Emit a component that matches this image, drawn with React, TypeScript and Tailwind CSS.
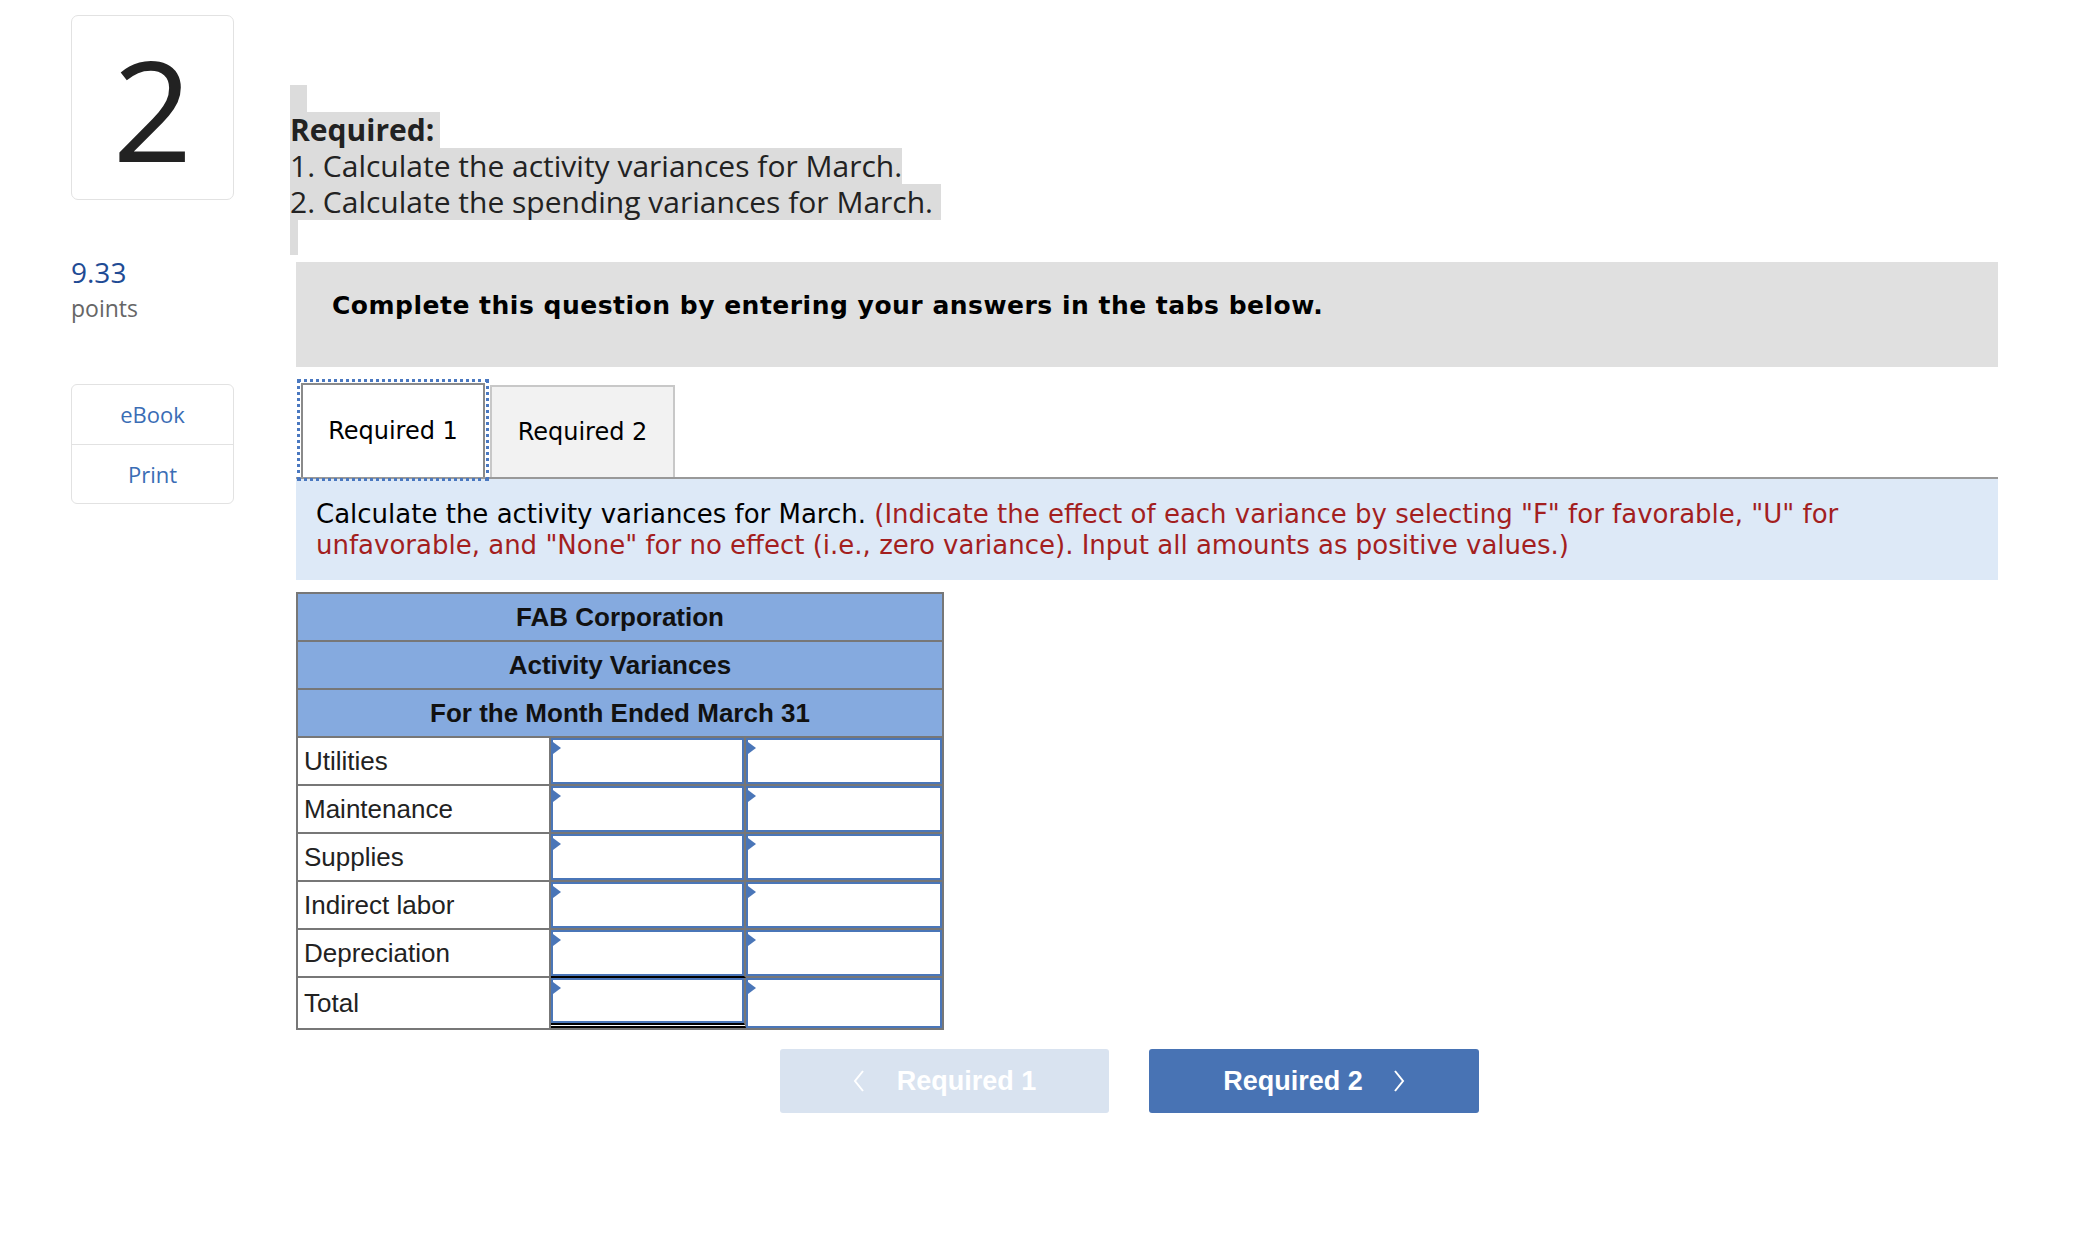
import { ReactNode } from "react";

const rows = ["Utilities", "Maintenance", "Supplies", "Indirect labor", "Depreciation"];

function InputBox({ children }: { children?: ReactNode }) {
  return (
    <div className="relative h-full w-full border-2 border-[#4a76b8] bg-white">
      <span className="absolute left-0 top-[2px] h-0 w-0 border-y-[6px] border-l-[8px] border-y-transparent border-l-[#4a76b8]" />
      {children}
    </div>
  );
}

function Chevron({ dir }: { dir: "left" | "right" }) {
  return (
    <svg width="12" height="22" viewBox="0 0 12 22" fill="none">
      <polyline
        points={dir === "left" ? "10,1 2,11 10,21" : "2,1 10,11 2,21"}
        stroke="white"
        strokeWidth="2"
      />
    </svg>
  );
}

export default function App() {
  return (
    <div className="flex min-h-screen items-start bg-white pl-[71px] pt-[15px]">
      {/* left rail */}
      <div className="w-[163px] shrink-0 font-['Open_Sans',sans-serif]">
        <div className="flex h-[185px] items-center justify-center rounded-[7px] border border-[#e2e2e2]">
          <span className="text-[140px] font-medium leading-none text-[#222]">2</span>
        </div>
        <p className="mt-[55px] text-[28px] leading-[34px] text-[#1f4b94]">9.33</p>
        <p className="mt-[4px] text-[23px] leading-[30px] text-[#666]">points</p>
        <div className="mt-[61px] rounded-[6px] border border-[#e2e2e2] text-center text-[22px] text-[#3a6db5]">
          <div className="flex h-[60px] items-center justify-center border-b border-[#e2e2e2]">eBook</div>
          <div className="flex h-[58px] items-center justify-center">Print</div>
        </div>
      </div>

      {/* main */}
      <div className="ml-[56px] pt-[70px]">
        <div className="font-['Open_Sans',sans-serif] text-[30px] leading-[36px] text-[#222]">
          <div className="h-[27px] w-[17px] bg-[#dcdcdc]" />
          <div className="w-fit bg-[#dcdcdc] pr-[6px] font-bold">Required:</div>
          <div className="w-fit bg-[#dcdcdc]">1. Calculate the activity variances for March.</div>
          <div className="w-fit bg-[#dcdcdc] pr-[8px]">2. Calculate the spending variances for March.</div>
          <div className="h-[35px] w-[8px] bg-[#dcdcdc]" />
        </div>

        <div className="ml-[6px] mt-[7px] w-[1702px]">
          <div className="h-[105px] bg-[#e0e0e0] pl-[36px] pt-[30px] font-['DejaVu_Sans',sans-serif] text-[25px] font-bold leading-[28px] tracking-[0.5px] text-black">
            Complete this question by entering your answers in the tabs below.
          </div>

          <div className="mt-[16px] flex items-end gap-[5px] pl-[5px] font-['DejaVu_Sans',sans-serif] text-[24px] text-black">
            <div className="flex h-[94px] w-[184px] items-center justify-center border-x-2 border-t-2 border-[#8a8a8a] bg-white outline-[3px] outline-offset-[1px] outline-[#4a78c0] outline-dotted">
              Required 1
            </div>
            <div className="flex h-[92px] w-[185px] items-center justify-center border-x-2 border-t-2 border-[#c8c8c8] bg-[#f2f2f2]">
              Required 2
            </div>
          </div>
          <div className="h-[2px] bg-[#999]" />

          <div className="h-[101px] bg-[#dde9f7] px-[20px] pt-[20px] font-['DejaVu_Sans',sans-serif] text-[26px] leading-[31px] text-black">
            Calculate the activity variances for March.{" "}
            <span className="text-[#a31f1f]">
              (Indicate the effect of each variance by selecting "F" for favorable, "U" for unfavorable, and "None" for no effect (i.e., zero variance). Input all amounts as positive values.)
            </span>
          </div>

          <div className="mt-[12px] w-[648px] border-2 border-[#777] font-['Liberation_Sans',Arial,sans-serif] text-[26px] text-[#222]">
            {["FAB Corporation", "Activity Variances", "For the Month Ended March 31"].map((t) => (
              <div
                key={t}
                className="flex h-[48px] items-center justify-center border-b-2 border-[#777] bg-[#85aadf] font-bold text-[#111]"
              >
                {t}
              </div>
            ))}
            {rows.map((label, i) => (
              <div key={label} className="flex h-[48px]">
                <div className="flex w-[253px] items-center border-b-2 border-r-2 border-[#777] pl-[6px]">
                  {label}
                </div>
                <div
                  className={
                    i === rows.length - 1
                      ? "w-[195px] border-b-2 border-r-2 border-b-black border-r-[#777]"
                      : "w-[195px] border-b-2 border-r-2 border-[#777]"
                  }
                >
                  <InputBox />
                </div>
                <div className="flex-1 border-b-2 border-[#777]">
                  <InputBox />
                </div>
              </div>
            ))}
            <div className="flex h-[50px]">
              <div className="flex w-[253px] items-center border-r-2 border-[#777] pl-[6px]">Total</div>
              <div className="w-[195px] border-b-[5px] border-r-2 border-double border-b-black border-r-[#777]">
                <InputBox />
              </div>
              <div className="flex-1">
                <InputBox />
              </div>
            </div>
          </div>

          <div className="ml-[484px] mt-[19px] flex gap-[40px] font-['Liberation_Sans',Arial,sans-serif] text-[27px] font-bold text-white">
            <button
              type="button"
              className="flex h-[64px] w-[329px] items-center justify-center gap-[32px] rounded-[3px] bg-[#d9e3f0]"
            >
              <Chevron dir="left" />
              <span>Required 1</span>
            </button>
            <button
              type="button"
              className="flex h-[64px] w-[330px] items-center justify-center gap-[30px] rounded-[3px] bg-[#4873b4]"
            >
              <span>Required 2</span>
              <Chevron dir="right" />
            </button>
          </div>
        </div>
      </div>
    </div>
  );
}
